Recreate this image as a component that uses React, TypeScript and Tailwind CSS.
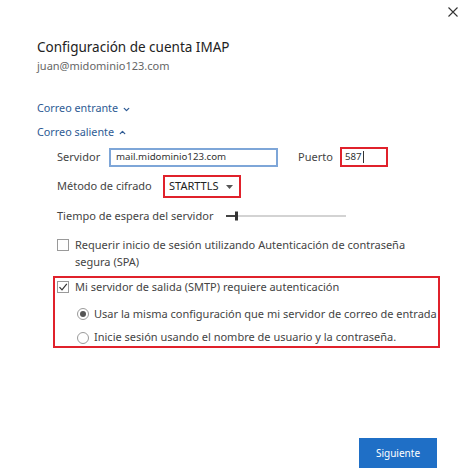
import { ChevronDown, ChevronUp } from "lucide-react"

const font = { fontFamily: '"Noto Sans", "Open Sans", sans-serif' }

function CheckBox({ checked }: { checked?: boolean }) {
  return (
    <span className="flex h-[12px] w-[12px] shrink-0 items-center justify-center border border-[#9a9a9a] bg-white">
      {checked && (
        <svg width="10" height="10" viewBox="0 0 10 10">
          <path d="M1.5 5.2 L4 7.8 L8.8 1.8" fill="none" stroke="#333" strokeWidth="1.2" />
        </svg>
      )}
    </span>
  )
}

function Radio({ checked }: { checked?: boolean }) {
  return (
    <span className="flex h-[12px] w-[12px] shrink-0 items-center justify-center rounded-full border border-[#9a9a9a] bg-white">
      {checked && <span className="h-[6px] w-[6px] rounded-full bg-[#555]" />}
    </span>
  )
}

export default function App() {
  return (
    <div className="flex h-[474px] w-[474px] flex-col bg-white text-[#444]" style={font}>
      {/* close */}
      <div className="flex justify-end pr-[16px] pt-[7px]">
        <svg width="10" height="10" viewBox="0 0 10 10">
          <path d="M0.5 0.5 L9.5 9.5 M9.5 0.5 L0.5 9.5" stroke="#333" strokeWidth="1.1" />
        </svg>
      </div>

      <div className="flex flex-col pl-[37px]">
        <h1 className="mt-[20px] text-[13.5px] leading-[20px] text-[#222]">Configuración de cuenta IMAP</h1>
        <p className="mt-[1px] text-[11px] leading-[16px] text-[#666]">juan@midominio123.com</p>

        <div className="mt-[26px] flex h-[16px] items-center gap-[4px] text-[10.8px] text-[#2e5b94]">
          <span>Correo entrante</span>
          <ChevronDown size={9} strokeWidth={3.5} className="mt-[2px]" />
        </div>
        <div className="mt-[8px] flex h-[16px] items-center gap-[4px] text-[10.8px] text-[#2e5b94]">
          <span>Correo saliente</span>
          <ChevronUp size={9} strokeWidth={3.5} />
        </div>

        <div className="flex flex-col pl-[20px] text-[11px]">
          {/* server row */}
          <div className="mt-[7px] flex h-[20px] items-center">
            <span className="w-[52px]">Servidor</span>
            <div className="flex h-[19px] w-[169px] items-center border-2 border-[#7ea6d8] px-[5px] text-[9.7px] text-[#333]">
              mail.midominio123.com
            </div>
            <span className="ml-[20px] w-[42px]">Puerto</span>
            <div className="flex h-[20px] w-[48px] items-center border-2 border-[#e0212b] px-[3px] text-[9.7px] text-[#333]">
              587<span className="ml-[1px] h-[12px] w-px bg-[#333]" />
            </div>
          </div>

          {/* encryption */}
          <div className="mt-[8px] flex h-[23px] items-center">
            <span className="w-[106px]">Método de cifrado</span>
            <div className="flex h-[23px] w-[78px] items-center justify-between border-2 border-[#e0212b] pl-[4px] pr-[6px] text-[11px] text-[#222]">
              STARTTLS
              <svg width="7" height="4" viewBox="0 0 7 4">
                <path d="M0 0 L7 0 L3.5 4 Z" fill="#555" />
              </svg>
            </div>
          </div>

          {/* timeout */}
          <div className="mt-[8px] flex h-[20px] items-center">
            <span className="w-[169px] whitespace-nowrap">Tiempo de espera del servidor</span>
            <svg width="122" height="10" viewBox="0 0 122 10">
              <rect x="0" y="4" width="10" height="2" fill="#444" />
              <rect x="10" y="4.5" width="110" height="1" fill="#a8a8a8" />
              <rect x="9" y="0.5" width="3" height="9" fill="#333" />
            </svg>
          </div>

          {/* SPA */}
          <div className="mt-[10px] flex items-start gap-[6px] leading-[17px]">
            <span className="mt-[3px]">
              <CheckBox />
            </span>
            <span className="w-[345px]">
              Requerir inicio de sesión utilizando Autenticación de contraseña segura (SPA)
            </span>
          </div>

          {/* smtp auth */}
          <div className="-ml-[4px] mt-[6px] flex h-[72px] w-[387px] flex-col border-2 border-[#e0212b] pl-[2px]">
            <div className="mt-[1px] flex h-[17px] items-center gap-[6px]">
              <CheckBox checked />
              <span>Mi servidor de salida (SMTP) requiere autenticación</span>
            </div>
            <div className="mt-[10px] flex h-[17px] items-center gap-[5px] pl-[20px]">
              <Radio checked />
              <span className="whitespace-nowrap">Usar la misma configuración que mi servidor de correo de entrada</span>
            </div>
            <div className="mt-[7px] flex h-[17px] items-center gap-[5px] pl-[20px]">
              <Radio />
              <span>Inicie sesión usando el nombre de usuario y la contraseña.</span>
            </div>
          </div>
        </div>
      </div>

      <div className="mt-auto flex justify-end pb-[6px] pr-[37px]">
        <button className="h-[30px] w-[78px] bg-[#1f6fc6] text-[10px] text-white">Siguiente</button>
      </div>
    </div>
  )
}
